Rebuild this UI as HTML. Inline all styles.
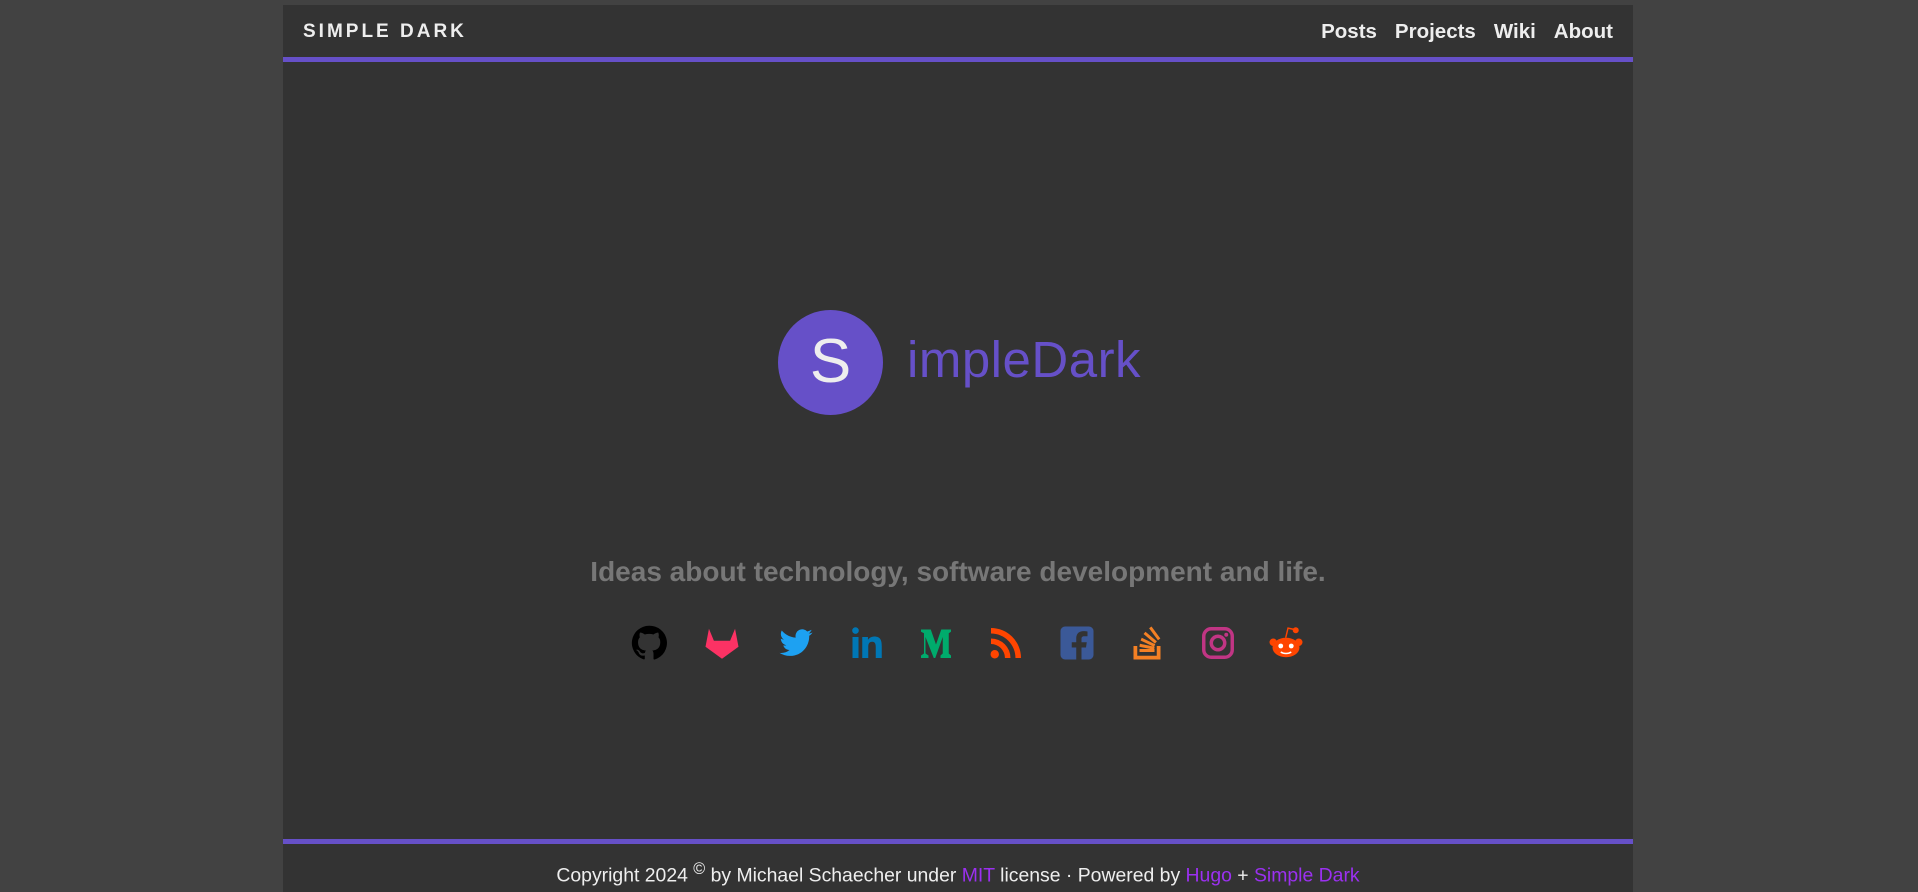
<!DOCTYPE html>
<html><head><meta charset="utf-8"><style>
html,body{margin:0;padding:0;background:#424242;width:1918px;height:892px;overflow:hidden;font-family:"Liberation Sans",sans-serif}
.c{position:absolute;left:283px;top:5px;width:1350px;height:887px;background:#333}
.hdr{position:absolute;left:0;top:0;width:1350px;height:52px;border-bottom:5px solid #6650c8}
.title{position:absolute;left:20px;top:16px;font-size:19px;font-weight:bold;letter-spacing:3px;color:#eee}
.nav{position:absolute;right:20px;top:15px;font-size:20.5px;font-weight:bold;color:#eee}
.nav span{margin-left:18px}
.circ{position:absolute;left:495px;top:305px;width:105px;height:105px;border-radius:50%;background:#6650c8;color:#eee;font-size:62px;text-align:center;line-height:103px}
.name{position:absolute;left:624px;top:325px;font-size:51px;color:#6650c8;letter-spacing:0.5px}
.tag{position:absolute;left:0;width:1350px;top:551px;text-align:center;font-size:28px;font-weight:bold;color:#777}
.icons{position:absolute;left:0;top:620px;width:1350px;height:40px}
.icons svg{position:absolute;top:0;width:36px;height:36px}
.foot{position:absolute;left:0;top:834px;width:1350px;border-top:5px solid #6650c8}
.ft{position:absolute;left:0;width:1350px;top:855px;text-align:center;font-size:19.4px;color:#eee}
.ft a{color:#9b30f0;text-decoration:none}
</style></head><body>
<div class="c">
<div class="hdr"><div class="title">SIMPLE DARK</div><div class="nav"><span>Posts</span><span>Projects</span><span>Wiki</span><span>About</span></div></div>
<div class="circ">S</div>
<div class="name">impleDark</div>
<div class="tag">Ideas about technology, software development and life.</div>
<div class="icons">
<svg style="left:348px" viewBox="0 0 24 24"><path fill="#000" d="M12 .5a11.5 11.5 0 0 0-3.6 22.4c.6.1.8-.3.8-.6v-2c-3.2.7-3.9-1.5-3.9-1.5-.5-1.3-1.3-1.7-1.300-1.700-1-.7.1-.7.1-.7 1.2.1 1.8 1.2 1.8 1.2 1 1.8 2.7 1.3 3.4 1 .1-.8.4-1.3.7-1.6-2.6-.3-5.3-1.3-5.3-5.7 0-1.3.5-2.3 1.2-3.1-.1-.3-.5-1.5.1-3.1 0 0 1-.3 3.2 1.2a11 11 0 0 1 5.8 0c2.2-1.5 3.2-1.2 3.2-1.2.6 1.6.2 2.8.1 3.1.8.8 1.2 1.8 1.2 3.1 0 4.4-2.7 5.4-5.3 5.7.4.4.8 1.1.8 2.2v3.2c0 .3.2.7.8.6A11.5 11.5 0 0 0 12 .5z"/></svg>
<svg style="left:421px" viewBox="0 0 24 24"><path fill="#fc3264" d="M12 22.5 1 14.5l2.3-12 3.3 8h10.8l3.3-8 2.3 12z"/></svg>
<svg style="left:495px" viewBox="0 0 24 24"><path fill="#1da1f2" d="M23 5c-.8.4-1.7.6-2.6.7.9-.6 1.6-1.4 2-2.5-.9.5-1.9.9-2.9 1.1a4.5 4.5 0 0 0-7.7 4.1C8 8.2 4.7 6.4 2.5 3.7a4.5 4.5 0 0 0 1.4 6c-.7 0-1.4-.2-2-.6 0 2.200 1.600 4 3.600 4.400-.7.2-1.400.2-2 .1.6 1.800 2.200 3.100 4.200 3.100A9 9 0 0 1 1 18.600 12.800 12.800 0 0 0 8 20.600c8.300 0 12.800-6.900 12.800-12.800v-.6C21.700 6.600 22.400 5.900 23 5z"/></svg>
<svg style="left:565px" viewBox="0 0 24 24"><path fill="#0077b5" d="M3 8h4v14H3zM5 1.5a2.2 2.2 0 1 1 0 4.4 2.2 2.2 0 0 1 0-4.4zM9.500 8h3.800v2c.6-1 2-2.300 4.200-2.300 4.300 0 5 2.800 5 6.500V22h-4v-7c0-1.700-.1-3.800-2.400-3.800s-2.600 1.800-2.600 3.700V22h-4z"/></svg>
<svg style="left:635px" viewBox="0 0 24 24"><path fill="#00ab6c" d="M2 3h6.500L12 13l3.500-10H22v1.500l-1.500 1V19l1.500 1.300V22h-7v-1.700l1.500-1.300V8l-5 14h-1L5 8v11l2 1.300V22H2v-1.700l2-1.300V5.500l-2-1z"/></svg>
<svg style="left:705px" viewBox="0 0 24 24"><g fill="#ff4500"><circle cx="4.500" cy="19.500" r="2.800"/><path d="M2 9a13 13 0 0 1 13 13h-3.700A9.300 9.300 0 0 0 2 12.700z"/><path d="M2 2a20 20 0 0 1 20 20h-3.700A16.300 16.300 0 0 0 2 5.700z"/></g></svg>
<svg style="left:776px" viewBox="0 0 24 24"><path fill="#3b5998" d="M4 1h16a3 3 0 0 1 3 3v16a3 3 0 0 1-3 3h-5v-8h3l.5-3.500H15V9.300c0-1 .3-1.800 1.800-1.800H19V4.300c-.4 0-1.500-.2-2.800-.2-2.800 0-4.700 1.700-4.700 4.800v2.600H8.500V15h3v8H4a3 3 0 0 1-3-3V4a3 3 0 0 1 3-3z"/></svg>
<svg style="left:846px" viewBox="0 0 24 24"><g fill="#f48024"><path d="M3 14h2.500v6.500h13V14H21v9H3z"/><path d="M7 16h10v2H7zM7.300 12.500l9.800 2-.4 2-9.800-2zM8.500 8.500l9 4.300-.8 1.800-9-4.300zM11 4.500l7.600 6.400-1.300 1.500-7.600-6.400zM15 1l5.900 8-1.600 1.200-5.900-8z"/></g></svg>
<svg style="left:917px" viewBox="0 0 24 24"><g fill="none" stroke="#c13584" stroke-width="2.300"><rect x="2.500" y="2.500" width="19" height="19" rx="5"/><circle cx="12" cy="12" r="4.500"/></g><circle cx="17.500" cy="6.500" r="1.300" fill="#c13584"/></svg>
<svg style="left:985px" viewBox="0 0 24 24"><g fill="#ff4500"><ellipse cx="12" cy="15" rx="9" ry="6.500"/><circle cx="3.500" cy="11.500" r="2.500"/><circle cx="20.500" cy="11.500" r="2.500"/><circle cx="18.500" cy="3.500" r="2"/><path d="M11.300 8.500 13 1.500l5.500 1.200-.3 1-4.500-1-1.400 5.800z"/></g><circle cx="8.500" cy="14" r="1.600" fill="#fff"/><circle cx="15.500" cy="14" r="1.600" fill="#fff"/><path d="M8.500 18c2 1.300 5 1.300 7 0" stroke="#fff" stroke-width="1" fill="none"/></svg>
</div>
<div class="foot"></div>
<div class="ft">Copyright 2024 <sup>©</sup> by Michael Schaecher under <a>MIT</a> license · Powered by <a>Hugo</a> + <a>Simple Dark</a></div>
</div>
</body></html>
